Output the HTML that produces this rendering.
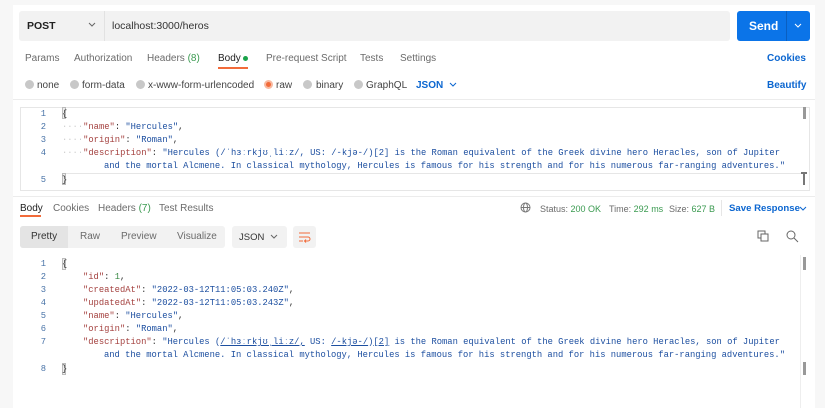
<!DOCTYPE html>
<html><head><meta charset="utf-8"><style>
*{margin:0;padding:0;box-sizing:border-box}
body{width:825px;height:408px;overflow:hidden;background:#f7f7f7;font-family:"Liberation Sans",sans-serif;font-size:10px;color:#6b6b6b;position:relative}
.a{position:absolute;white-space:pre}
#main{position:absolute;left:13px;top:5px;width:802px;height:403px;background:#fff}
.mono{font-family:"Liberation Mono",monospace;font-size:8.8px;color:#1d4fa0}
.k{color:#a4413f}.n{color:#3a8a46}.ln{color:#4a74a8;font-family:"Liberation Mono",monospace;font-size:8.8px;width:16px;text-align:right}
.blue{color:#0b66d0;font-weight:bold}
.rad{position:absolute;width:9px;height:9px;border-radius:50%;background:#c8c8c8;top:80px}
.g{color:#3a9a50}
.st{font-size:9px}
</style></head><body>
<div id="main"></div>
<div class="a" style="left:19px;top:11px;width:711px;height:30px;background:#f2f2f2;border-radius:3px"></div>
<div class="a" style="left:104px;top:11px;width:1px;height:30px;background:#e2e2e2"></div>
<div class="a" style="left:27px;top:20px;font-size:10.5px;color:#222;font-weight:bold">POST</div>
<svg class="a" style="left:88px;top:22px" width="8" height="6"><path d="M1 1L4 4L7 1" stroke="#666" fill="none"/></svg>
<div class="a" style="left:112px;top:20px;font-size:10.5px;color:#333">localhost:3000/heros</div>
<div class="a" style="left:737px;top:11px;width:73px;height:30px;background:#0b74e8;border-radius:3px"></div>
<div class="a" style="left:786px;top:11px;width:1px;height:30px;background:#0a5fc0"></div>
<div class="a" style="left:749px;top:19px;font-size:12px;color:#fff;font-weight:bold">Send</div>
<svg class="a" style="left:794px;top:23px" width="8" height="6"><path d="M1 1L4 4L7 1" stroke="#fff" fill="none"/></svg>
<div class="a" style="left:25px;top:53px;font-size:10px">Params</div>
<div class="a" style="left:74px;top:53px">Authorization</div>
<div class="a" style="left:147px;top:53px">Headers <span class="g">(8)</span></div>
<div class="a" style="left:218px;top:53px;color:#222">Body</div>
<div class="a" style="left:243px;top:56px;width:5px;height:5px;border-radius:50%;background:#1aa34a"></div>
<div class="a" style="left:218px;top:67px;width:30px;height:2px;background:#f26b3a"></div>
<div class="a" style="left:266px;top:53px">Pre-request Script</div>
<div class="a" style="left:360px;top:53px">Tests</div>
<div class="a" style="left:400px;top:53px">Settings</div>
<div class="a blue" style="left:767px;top:53px">Cookies</div>
<div class="rad" style="left:25px"></div><div class="a" style="left:37px;top:80px;color:#444">none</div>
<div class="rad" style="left:70px"></div><div class="a" style="left:82px;top:80px;color:#444">form-data</div>
<div class="rad" style="left:136px"></div><div class="a" style="left:148px;top:80px;color:#444">x-www-form-urlencoded</div>
<div class="rad" style="left:264px;background:#f26b3a;border:2px solid #f8b9a0"></div><div class="a" style="left:276px;top:80px;color:#444">raw</div>
<div class="rad" style="left:303px"></div><div class="a" style="left:316px;top:80px;color:#444">binary</div>
<div class="rad" style="left:354px"></div><div class="a" style="left:366px;top:80px;color:#444">GraphQL</div>
<div class="a blue" style="left:416px;top:80px">JSON</div>
<svg class="a" style="left:449px;top:82px" width="8" height="6"><path d="M1 1L4 4L7 1" stroke="#0b66d0" fill="none"/></svg>
<div class="a blue" style="left:767px;top:80px">Beautify</div>
<div class="a" style="left:13px;top:99px;width:802px;height:1px;background:#ececec"></div>
<div class="a" style="left:20px;top:107px;width:790px;height:84px;border:1px solid #e6e6e6"></div>
<div class="a" style="left:62px;top:173px;width:744px;height:1px;background:#e6e6e6"></div>
<div class="a" style="left:803px;top:107px;width:3px;height:12px;background:#999"></div>
<div class="a" style="left:801px;top:172px;width:6px;height:13px;border-top:2px solid #777;"></div>
<div class="a" style="left:803px;top:172px;width:2px;height:13px;background:#777"></div>
<div class="a" style="left:62px;top:107px;width:4px;height:12px;background:#eee;border:1px solid #bbb"></div>
<div class="a" style="left:62px;top:173px;width:4px;height:12px;background:#eee;border:1px solid #bbb"></div>
<div class="a ln" style="left:30px;top:109px">1</div>
<div class="a ln" style="left:30px;top:122px">2</div>
<div class="a ln" style="left:30px;top:135px">3</div>
<div class="a ln" style="left:30px;top:148px">4</div>
<div class="a ln" style="left:30px;top:175px">5</div>
<div class="a mono" style="left:62px;top:109px;color:#333">{</div>
<div class="a mono" style="left:62px;top:122px"><span style="color:#ccc">····</span><span class="k">"name"</span><span style="color:#333">: </span>"Hercules"<span style="color:#333">,</span></div>
<div class="a mono" style="left:62px;top:135px"><span style="color:#ccc">····</span><span class="k">"origin"</span><span style="color:#333">: </span>"Roman"<span style="color:#333">,</span></div>
<div class="a mono" style="left:62px;top:148px"><span style="color:#ccc">····</span><span class="k">"description"</span><span style="color:#333">: </span>"Hercules (/ˈhɜːrkjʊˌliːz/, US: /-kjə-/)[2] is the Roman equivalent of the Greek divine hero Heracles, son of Jupiter</div>
<div class="a mono" style="left:104px;top:161px">and the mortal Alcmene. In classical mythology, Hercules is famous for his strength and for his numerous far-ranging adventures."</div>
<div class="a mono" style="left:62px;top:175px;color:#333">}</div>
<div class="a" style="left:13px;top:196px;width:802px;height:1px;background:#ececec"></div>
<div class="a" style="left:20px;top:203px;color:#222">Body</div>
<div class="a" style="left:20px;top:215px;width:21px;height:2px;background:#f26b3a"></div>
<div class="a" style="left:53px;top:203px">Cookies</div>
<div class="a" style="left:98px;top:203px">Headers <span class="g">(7)</span></div>
<div class="a" style="left:159px;top:203px">Test Results</div>
<svg class="a" style="left:520px;top:202px" width="11" height="11"><circle cx="5.5" cy="5.5" r="4.5" stroke="#777" fill="none"/><ellipse cx="5.5" cy="5.5" rx="2" ry="4.5" stroke="#777" fill="none"/><path d="M1 5.5H10" stroke="#777"/></svg>
<div class="a st" style="left:540px;top:204px">Status: <span class="g">200 OK</span></div>
<div class="a st" style="left:609px;top:204px">Time: <span class="g">292 ms</span></div>
<div class="a st" style="left:669px;top:204px">Size: <span class="g">627 B</span></div>
<div class="a" style="left:721px;top:200px;width:1px;height:16px;background:#e6e6e6"></div>
<div class="a blue" style="left:729px;top:203px;font-size:9.6px">Save Response</div>
<svg class="a" style="left:799px;top:206px" width="8" height="6"><path d="M1 1L4 4L7 1" stroke="#0b66d0" fill="none"/></svg>
<div class="a" style="left:20px;top:226px;width:205px;height:22px;background:#f2f2f2;border-radius:3px"></div>
<div class="a" style="left:20px;top:226px;width:48px;height:22px;background:#e4e4e4;border-radius:3px 0 0 3px"></div>
<div class="a" style="left:31px;top:231px;color:#333">Pretty</div>
<div class="a" style="left:80px;top:231px">Raw</div>
<div class="a" style="left:121px;top:231px">Preview</div>
<div class="a" style="left:177px;top:231px">Visualize</div>
<div class="a" style="left:232px;top:226px;width:55px;height:22px;background:#f2f2f2;border-radius:3px"></div>
<div class="a" style="left:239px;top:232px;color:#333;font-size:9.5px">JSON</div>
<svg class="a" style="left:270px;top:234px" width="8" height="6"><path d="M1 1L4 4L7 1" stroke="#666" fill="none"/></svg>
<div class="a" style="left:293px;top:226px;width:23px;height:22px;background:#f2f2f2;border-radius:3px"></div>
<svg class="a" style="left:298px;top:231px" width="14" height="12"><path d="M1 2H12M1 6H10a2 2 0 0 1 0 4H7M1 10H5M8 8.5L6.5 10L8 11.5" stroke="#f26b3a" fill="none"/></svg>
<svg class="a" style="left:757px;top:230px" width="13" height="13"><rect x="1" y="1" width="7" height="7" stroke="#666" fill="none"/><rect x="4" y="4" width="7" height="7" stroke="#666" fill="#fff"/></svg>
<svg class="a" style="left:786px;top:230px" width="13" height="13"><circle cx="5" cy="5" r="4" stroke="#666" fill="none"/><path d="M8 8L12 12" stroke="#666"/></svg>
<div class="a" style="left:803px;top:257px;width:3px;height:13px;background:#999"></div>
<div class="a" style="left:803px;top:362px;width:3px;height:13px;background:#999"></div>
<div class="a" style="left:800px;top:255px;width:1px;height:153px;background:#eee"></div>
<div class="a" style="left:62px;top:258px;width:4px;height:12px;background:#eee;border:1px solid #bbb"></div>
<div class="a" style="left:62px;top:363px;width:4px;height:12px;background:#eee;border:1px solid #bbb"></div>
<div class="a ln" style="left:30px;top:259px">1</div>
<div class="a ln" style="left:30px;top:272px">2</div>
<div class="a ln" style="left:30px;top:285px">3</div>
<div class="a ln" style="left:30px;top:298px">4</div>
<div class="a ln" style="left:30px;top:311px">5</div>
<div class="a ln" style="left:30px;top:324px">6</div>
<div class="a ln" style="left:30px;top:337px">7</div>
<div class="a ln" style="left:30px;top:364px">8</div>
<div class="a mono" style="left:62px;top:259px;color:#333">{</div>
<div class="a mono" style="left:83px;top:272px"><span class="k">"id"</span><span style="color:#333">: </span><span class="n">1</span><span style="color:#333">,</span></div>
<div class="a mono" style="left:83px;top:285px"><span class="k">"createdAt"</span><span style="color:#333">: </span>"2022-03-12T11:05:03.240Z"<span style="color:#333">,</span></div>
<div class="a mono" style="left:83px;top:298px"><span class="k">"updatedAt"</span><span style="color:#333">: </span>"2022-03-12T11:05:03.243Z"<span style="color:#333">,</span></div>
<div class="a mono" style="left:83px;top:311px"><span class="k">"name"</span><span style="color:#333">: </span>"Hercules"<span style="color:#333">,</span></div>
<div class="a mono" style="left:83px;top:324px"><span class="k">"origin"</span><span style="color:#333">: </span>"Roman"<span style="color:#333">,</span></div>
<div class="a mono" style="left:83px;top:337px"><span class="k">"description"</span><span style="color:#333">: </span>"Hercules (<u>/ˈhɜːrkjʊˌliːz/,</u> US: <u>/-kjə-/</u>)<u>[2]</u> is the Roman equivalent of the Greek divine hero Heracles, son of Jupiter</div>
<div class="a mono" style="left:104px;top:350px">and the mortal Alcmene. In classical mythology, Hercules is famous for his strength and for his numerous far-ranging adventures."</div>
<div class="a mono" style="left:62px;top:364px;color:#333">}</div>
</body></html>
